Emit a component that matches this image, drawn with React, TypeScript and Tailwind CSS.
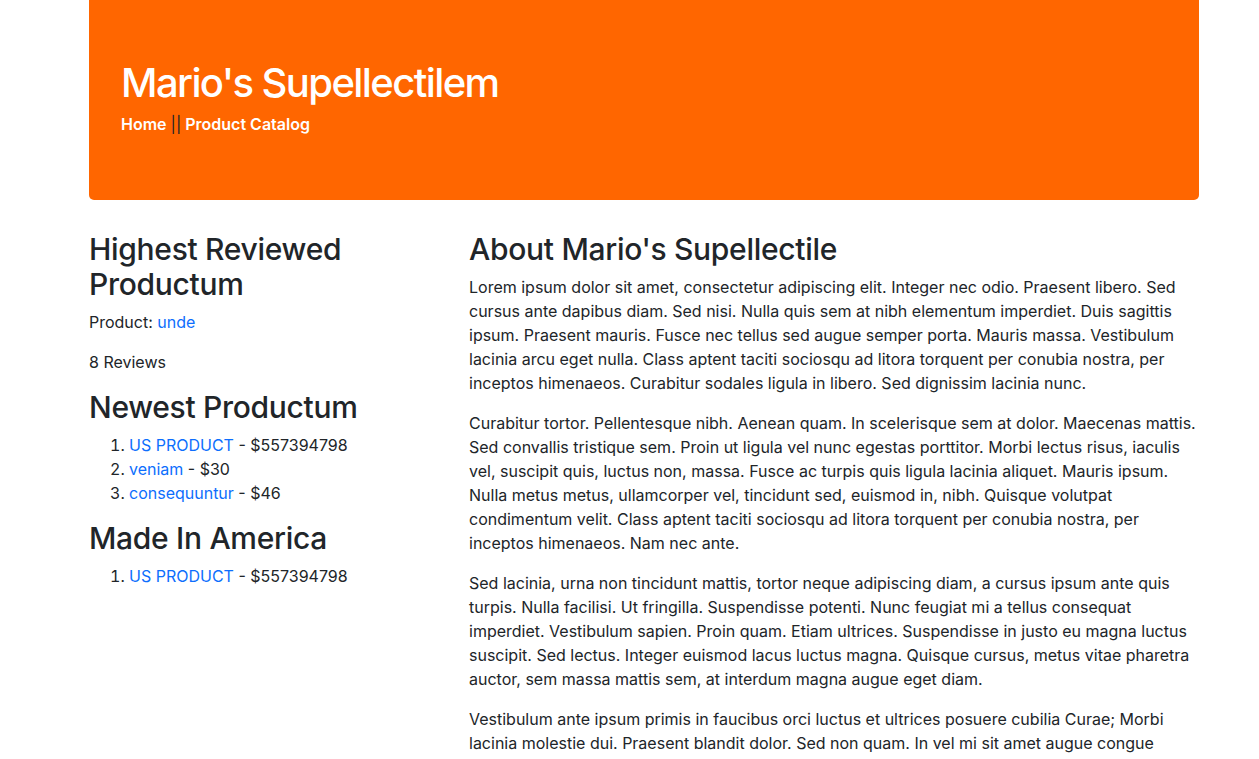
import React from "react";

const para1 =
  "Lorem ipsum dolor sit amet, consectetur adipiscing elit. Integer nec odio. Praesent libero. Sed cursus ante dapibus diam. Sed nisi. Nulla quis sem at nibh elementum imperdiet. Duis sagittis ipsum. Praesent mauris. Fusce nec tellus sed augue semper porta. Mauris massa. Vestibulum lacinia arcu eget nulla. Class aptent taciti sociosqu ad litora torquent per conubia nostra, per inceptos himenaeos. Curabitur sodales ligula in libero. Sed dignissim lacinia nunc.";
const para2 =
  "Curabitur tortor. Pellentesque nibh. Aenean quam. In scelerisque sem at dolor. Maecenas mattis. Sed convallis tristique sem. Proin ut ligula vel nunc egestas porttitor. Morbi lectus risus, iaculis vel, suscipit quis, luctus non, massa. Fusce ac turpis quis ligula lacinia aliquet. Mauris ipsum. Nulla metus metus, ullamcorper vel, tincidunt sed, euismod in, nibh. Quisque volutpat condimentum velit. Class aptent taciti sociosqu ad litora torquent per conubia nostra, per inceptos himenaeos. Nam nec ante.";
const para3 =
  "Sed lacinia, urna non tincidunt mattis, tortor neque adipiscing diam, a cursus ipsum ante quis turpis. Nulla facilisi. Ut fringilla. Suspendisse potenti. Nunc feugiat mi a tellus consequat imperdiet. Vestibulum sapien. Proin quam. Etiam ultrices. Suspendisse in justo eu magna luctus suscipit. Sed lectus. Integer euismod lacus luctus magna. Quisque cursus, metus vitae pharetra auctor, sem massa mattis sem, at interdum magna augue eget diam.";
const para4 =
  "Vestibulum ante ipsum primis in faucibus orci luctus et ultrices posuere cubilia Curae; Morbi lacinia molestie dui. Praesent blandit dolor. Sed non quam. In vel mi sit amet augue congue elementum. Morbi in ipsum sit amet pede facilisis laoreet. Donec lacus nunc, viverra nec, blandit vel, egestas et, augue. Vestibulum tincidunt malesuada tellus. Ut ultrices ultrices enim. Curabitur sit amet mauris.";

const newest = [
  { name: "US PRODUCT", price: "$557394798" },
  { name: "veniam", price: "$30" },
  { name: "consequuntur", price: "$46" },
];

function Heading({ children }: { children: React.ReactNode }) {
  return <h2 className="mb-2 text-[30px] font-medium leading-[35px] tracking-[-0.3px]">{children}</h2>;
}

export default function App() {
  return (
    <div className="min-h-screen bg-white text-[16px] leading-6 text-[#212529] [font-family:Inter,'Noto_Sans',sans-serif]">
      <div className="ml-[89px] w-[1110px]">
        <header className="mb-8 rounded-b-[5px] bg-[#ff6600] px-8 pb-16 pt-[59px]">
          <h1 className="mb-[5px] text-[40px] font-medium leading-[48px] tracking-[-1.6px] text-white">
            Mario's Supellectilem
          </h1>
          <p className="font-semibold">
            <a href="#" className="text-white">Home</a>{" "}
            <span className="font-normal text-[#212529]">||</span>{" "}
            <a href="#" className="text-white">Product Catalog</a>
          </p>
        </header>

        <div className="flex gap-10">
          <aside className="w-[340px] shrink-0">
            <Heading>Highest Reviewed Productum</Heading>
            <p className="mb-4">
              Product: <a href="#" className="text-[#0d6efd]">unde</a>
            </p>
            <p className="mb-4">8 Reviews</p>

            <Heading>Newest Productum</Heading>
            <ol className="mb-4 list-decimal pl-10">
              {newest.map((p) => (
                <li key={p.name}>
                  <a href="#" className="text-[#0d6efd]">{p.name}</a> - {p.price}
                </li>
              ))}
            </ol>

            <Heading>Made In America</Heading>
            <ol className="mb-4 list-decimal pl-10">
              <li>
                <a href="#" className="text-[#0d6efd]">US PRODUCT</a> - $557394798
              </li>
            </ol>
          </aside>

          <main className="flex-1">
            <Heading>About Mario's Supellectile</Heading>
            <p className="mb-4">{para1}</p>
            <p className="mb-4">{para2}</p>
            <p className="mb-4">{para3}</p>
            <p className="mb-4">{para4}</p>
          </main>
        </div>
      </div>
    </div>
  );
}
